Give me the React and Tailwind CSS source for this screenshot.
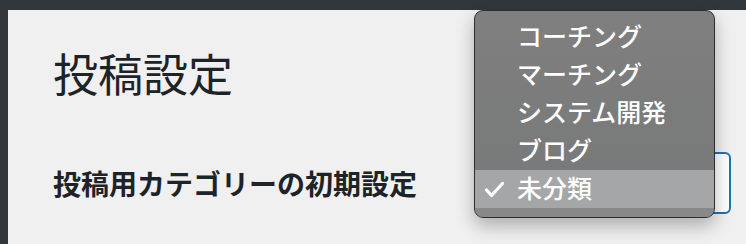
import React from "react";

const items = ["コーチング", "マーチング", "システム開発", "ブログ", "未分類"];

export default function App() {
  return (
    <div
      className="w-[746px] h-[244px] bg-[#32373c] pt-[10px] pl-[8px] overflow-hidden"
      style={{ fontFamily: '"Noto Sans CJK JP", "Noto Sans", sans-serif' }}
    >
      <div className="relative h-full bg-[#f0f0f1] pl-[45px]">
        <h1 className="pt-[38px] text-[45px] leading-[50px] font-normal text-[#1d2327]">
          投稿設定
        </h1>
        <div className="mt-[54px] flex items-center">
          <div className="w-[442px] text-[28px] leading-[36px] font-bold text-[#1d2327]">
            投稿用カテゴリーの初期設定
          </div>
          <div className="h-[62px] w-[236px] rounded-[6px] border-2 border-[#2271b1] bg-white"></div>
        </div>

        <div className="absolute left-[466px] top-0 w-[241px] rounded-[9px] border border-[#2e2e2e] bg-gradient-to-b from-[#7f7f7f] to-[#777879] pt-[7px] pb-[9px] shadow-[0_8px_18px_rgba(0,0,0,0.28)] overflow-hidden">
          {items.map((t, i) => {
            const sel = i === items.length - 1;
            return (
              <div
                key={t}
                className={
                  "relative flex h-[38px] items-center pl-[42px] text-[25px] font-medium text-white " +
                  (sel ? "bg-[#a4a6a8]" : "")
                }
              >
                {sel && (
                  <svg
                    className="absolute left-[9px] top-[11px]"
                    width="21"
                    height="17"
                    viewBox="0 0 21 17"
                  >
                    <polyline
                      points="2.5,9 7.5,14.5 18.5,2.5"
                      fill="none"
                      stroke="white"
                      strokeWidth="3.2"
                      strokeLinecap="round"
                      strokeLinejoin="round"
                    />
                  </svg>
                )}
                <span className="leading-none -mt-[3px]">{t}</span>
              </div>
            );
          })}
          <div className="absolute bottom-0 left-0 right-0 h-[9px] bg-[#87888a]"></div>
        </div>
      </div>
    </div>
  );
}
